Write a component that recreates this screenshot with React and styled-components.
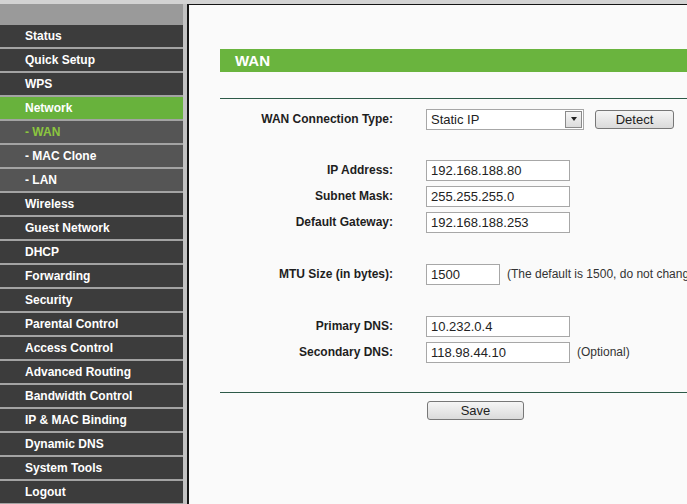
import React from "react";
import styled, { createGlobalStyle } from "styled-components";

const GlobalStyle = createGlobalStyle`
  html, body {
    margin: 0;
    padding: 0;
    background: #fafafa;
    font-family: "Liberation Sans", Arial, sans-serif;
  }
`;

const Page = styled.div`
  display: flex;
  flex-direction: column;
  width: 687px;
  height: 504px;
  overflow: hidden;
`;

const TopStrip = styled.div`
  height: 4px;
  background: #d3d3d3;
  flex-shrink: 0;
`;

const Body = styled.div`
  display: flex;
  flex: 1;
  min-height: 0;
`;

const Sidebar = styled.nav`
  width: 183px;
  display: flex;
  flex-direction: column;
  background: #9c9c9c;
  flex-shrink: 0;
`;

const SideHeader = styled.div`
  height: 21px;
  flex-shrink: 0;
  background: #9a9a9a;
`;

const MenuItem = styled.div`
  height: 22px;
  flex-shrink: 0;
  border-bottom: 2px solid #a3a3a3;
  display: flex;
  align-items: center;
  padding-left: 25px;
  font-size: 12px;
  font-weight: bold;
  color: ${(p) => (p.$current ? "#8cc63f" : "#ffffff")};
  background: ${(p) =>
    p.$active ? "#68b23c" : p.$sub ? "#555555" : "#3c3c3c"};
`;

const Gutter = styled.div`
  width: 4px;
  background: #c2c2c2;
  flex-shrink: 0;
`;

const Main = styled.main`
  flex: 1;
  background: #fafafa;
  border-left: 2px solid #151515;
  border-top: 1px solid #151515;
  padding: 44px 0 0 31px;
  min-width: 0;
  overflow: hidden;
`;

const TitleBar = styled.div`
  height: 23px;
  background: #6ab43e;
  color: #ffffff;
  font-size: 15px;
  font-weight: bold;
  display: flex;
  align-items: center;
  padding-left: 15px;
`;

const Rule = styled.div`
  height: 1px;
  background: #2d5a48;
  margin-top: ${(p) => p.$top}px;
`;

const Form = styled.div`
  display: flex;
  flex-direction: column;
  margin-top: 7px;
`;

const Row = styled.div`
  display: flex;
  align-items: center;
  height: 26px;
`;

const Spacer = styled.div`
  height: ${(p) => p.$h}px;
`;

const Label = styled.div`
  width: 173px;
  text-align: right;
  font-size: 12px;
  font-weight: bold;
  color: #1e1e1e;
  margin-right: 33px;
  flex-shrink: 0;
`;

const TextBox = styled.div`
  width: ${(p) => p.$w}px;
  height: 19px;
  box-sizing: content-box;
  border: 1px solid #a7a7a7;
  background: #ffffff;
  font-size: 13px;
  color: #222;
  display: flex;
  align-items: center;
  padding-left: 4px;
  flex-shrink: 0;
`;

const Select = styled.div`
  width: 152px;
  height: 19px;
  border: 1px solid #a7a7a7;
  background: #ffffff;
  display: flex;
  align-items: center;
  font-size: 13px;
  color: #222;
  padding-left: 4px;
  flex-shrink: 0;
`;

const SelectText = styled.span`
  flex: 1;
`;

const Arrow = styled.div`
  width: 15px;
  height: 15px;
  margin-right: 1px;
  border: 1px solid #8a8a8a;
  background: linear-gradient(#f6f6f6, #dcdcdc);
  display: flex;
  align-items: center;
  justify-content: center;
  &::after {
    content: "";
    border-left: 3px solid transparent;
    border-right: 3px solid transparent;
    border-top: 4px solid #222;
  }
`;

const Button = styled.button`
  width: ${(p) => p.$w}px;
  height: 19px;
  margin-left: ${(p) => p.$ml || 0}px;
  padding: 0;
  border: 1px solid #777;
  border-radius: 3px;
  background: linear-gradient(#f5f5f5, #dadada);
  font-family: "Liberation Sans", Arial, sans-serif;
  font-size: 13px;
  color: #222;
  flex-shrink: 0;
`;

const Hint = styled.span`
  margin-left: 7px;
  font-size: 12px;
  color: #333;
  white-space: nowrap;
`;

const Footer = styled.div`
  display: flex;
  padding: 8px 0 0 207px;
`;

const menu = [
  { t: "Status" },
  { t: "Quick Setup" },
  { t: "WPS" },
  { t: "Network", active: true },
  { t: "- WAN", sub: true, current: true },
  { t: "- MAC Clone", sub: true },
  { t: "- LAN", sub: true },
  { t: "Wireless" },
  { t: "Guest Network" },
  { t: "DHCP" },
  { t: "Forwarding" },
  { t: "Security" },
  { t: "Parental Control" },
  { t: "Access Control" },
  { t: "Advanced Routing" },
  { t: "Bandwidth Control" },
  { t: "IP & MAC Binding" },
  { t: "Dynamic DNS" },
  { t: "System Tools" },
  { t: "Logout" },
];

export default function App() {
  return (
    <Page>
      <GlobalStyle />
      <TopStrip />
      <Body>
        <Sidebar>
          <SideHeader />
          {menu.map((m) => (
            <MenuItem
              key={m.t}
              $active={m.active}
              $sub={m.sub}
              $current={m.current}
            >
              {m.t}
            </MenuItem>
          ))}
        </Sidebar>
        <Gutter />
        <Main>
          <TitleBar>WAN</TitleBar>
          <Rule $top={26} />
          <Form>
            <Row>
              <Label>WAN Connection Type:</Label>
              <Select>
                <SelectText>Static IP</SelectText>
                <Arrow />
              </Select>
              <Button $w={79} $ml={11}>Detect</Button>
            </Row>
            <Spacer $h={25} />
            <Row>
              <Label>IP Address:</Label>
              <TextBox $w={138}>192.168.188.80</TextBox>
            </Row>
            <Row>
              <Label>Subnet Mask:</Label>
              <TextBox $w={138}>255.255.255.0</TextBox>
            </Row>
            <Row>
              <Label>Default Gateway:</Label>
              <TextBox $w={138}>192.168.188.253</TextBox>
            </Row>
            <Spacer $h={26} />
            <Row>
              <Label>MTU Size (in bytes):</Label>
              <TextBox $w={68}>1500</TextBox>
              <Hint>(The default is 1500, do not change unless necessary.)</Hint>
            </Row>
            <Spacer $h={26} />
            <Row>
              <Label>Primary DNS:</Label>
              <TextBox $w={138}>10.232.0.4</TextBox>
            </Row>
            <Row>
              <Label>Secondary DNS:</Label>
              <TextBox $w={138}>118.98.44.10</TextBox>
              <Hint>(Optional)</Hint>
            </Row>
          </Form>
          <Rule $top={27} />
          <Footer>
            <Button $w={97}>Save</Button>
          </Footer>
        </Main>
      </Body>
    </Page>
  );
}
